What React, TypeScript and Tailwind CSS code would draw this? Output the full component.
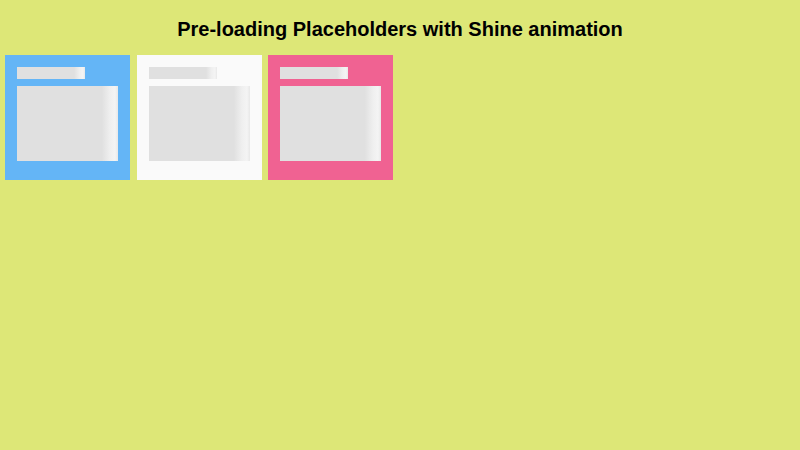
import React from 'react';

type Tone = 'blue' | 'white' | 'pink';

const cardBg: Record<Tone, string> = {
  blue: 'bg-[#64b5f6]',
  white: 'bg-[#fafafa]',
  pink: 'bg-[#f06292]',
};

// gray block with the shine band sitting near its right edge
const shine =
  'bg-[linear-gradient(to_right,#e0e0e0_0%,#e0e0e0_84%,#efefef_92%,#f4f4f4_97%,#e8e8e8_100%)]';

function Placeholder({ tone }: { tone: Tone }) {
  return (
    <div className={`w-[125px] h-[125px] shrink-0 px-[12px] pt-[12px] flex flex-col gap-[7px] ${cardBg[tone]}`}>
      <div className={`w-[68px] h-[12px] ${shine}`} />
      <div className={`w-full h-[75px] ${shine}`} />
    </div>
  );
}

export default function App() {
  return (
    <div className="w-[800px] h-[450px] bg-[#dde777] font-['Liberation_Sans',Arial,sans-serif]">
      <h1 className="pt-[18px] text-center text-[20px] leading-[23px] font-bold text-black">
        Pre-loading Placeholders with Shine animation
      </h1>
      <div className="mt-[14px] pl-[5px] flex gap-[6.5px]">
        <Placeholder tone="blue" />
        <Placeholder tone="white" />
        <Placeholder tone="pink" />
      </div>
    </div>
  );
}
